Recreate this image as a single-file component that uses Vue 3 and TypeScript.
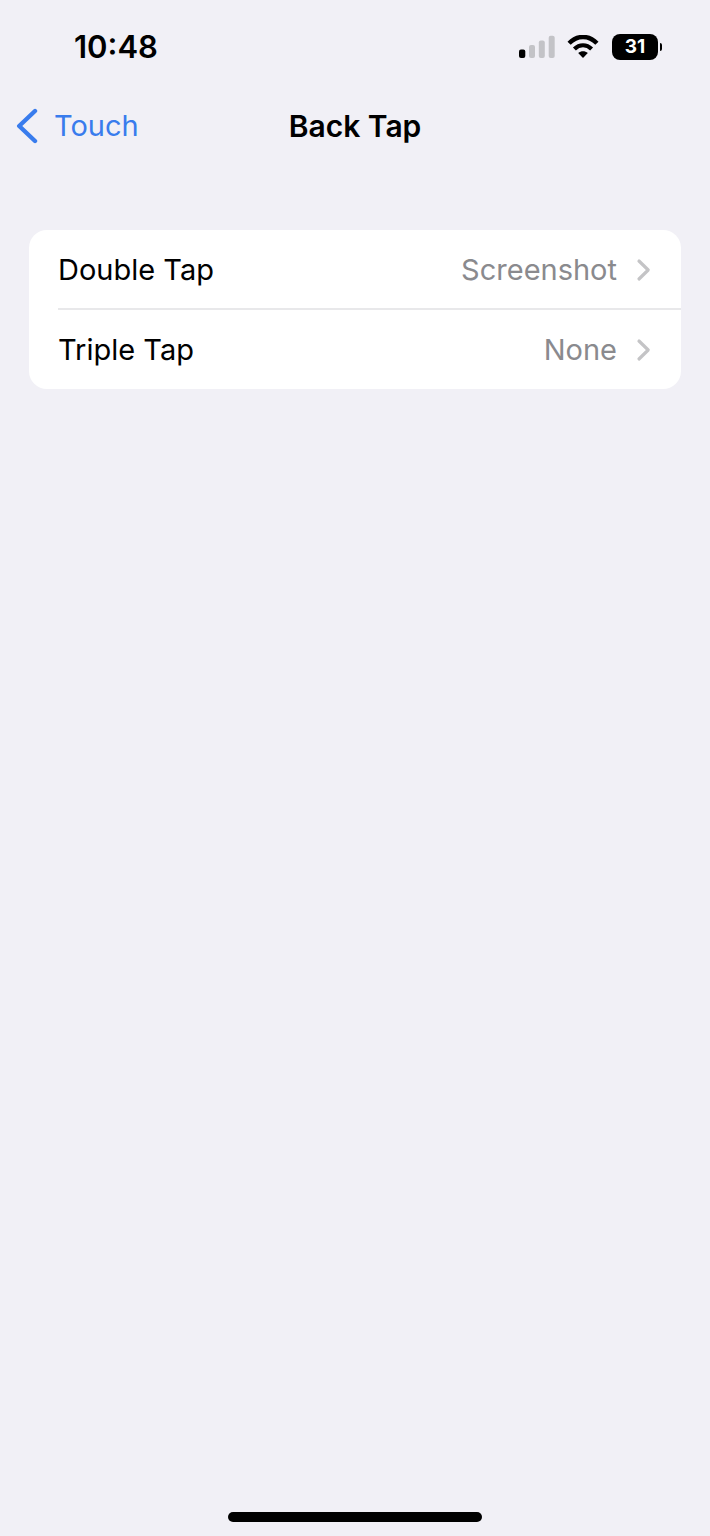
<script setup lang="ts">
interface Row {
  label: string
  value: string
}

const rows: Row[] = [
  { label: 'Double Tap', value: 'Screenshot' },
  { label: 'Triple Tap', value: 'None' },
]
</script>

<template>
  <div class="screen">
    <header>
      <div class="status">
        <time class="clock">10:48</time>
        <div class="indicators">
          <svg class="signal" viewBox="0 0 36 24" width="36" height="24" role="img" aria-label="Signal, one bar">
            <rect x="0" y="14.5" width="6.3" height="8.5" rx="2" fill="#000" />
            <rect x="10" y="10" width="6" height="13" rx="2" fill="#c3c3c7" />
            <rect x="19.8" y="5.5" width="6" height="17.5" rx="2" fill="#c3c3c7" />
            <rect x="29.7" y="0.8" width="6" height="22.2" rx="2" fill="#c3c3c7" />
          </svg>
          <svg class="wifi" viewBox="0 0 32 24" width="32" height="24" role="img" aria-label="Wi-Fi">
            <path d="M2.1 8.3C10-0.2 22-0.2 29.9 8.3" fill="none" stroke="#000" stroke-width="4.4" />
            <path d="M7.4 13.9C12.4 9 19.6 9 24.6 13.9" fill="none" stroke="#000" stroke-width="4.2" />
            <path d="M11.2 18.1C14 15.6 18 15.6 20.8 18.1L16.5 22.6Q16 23.1 15.5 22.6Z" fill="#000" />
          </svg>
          <div class="battery" role="img" aria-label="Battery 31 percent">
            <span class="charge">31</span>
            <span class="nub"></span>
          </div>
        </div>
      </div>
      <nav class="nav">
        <a class="back" href="#touch">
          <svg viewBox="0 0 22 36" width="22" height="36" aria-hidden="true">
            <path d="M19 3L3.2 18L19 33" fill="none" stroke="#397ced" stroke-width="4.4" stroke-linecap="round" stroke-linejoin="round" />
          </svg>
          <span>Touch</span>
        </a>
        <h1>Back Tap</h1>
      </nav>
    </header>
    <main>
      <ul class="list">
        <li v-for="row in rows" :key="row.label">
          <button class="row" type="button">
            <span class="label">{{ row.label }}</span>
            <span class="value">{{ row.value }}</span>
            <svg viewBox="0 0 16 24" width="16" height="24" aria-hidden="true">
              <path d="M3 3L12.2 12L3 21" fill="none" stroke="#c4c4c6" stroke-width="3.2" stroke-linecap="round" stroke-linejoin="round" />
            </svg>
          </button>
        </li>
      </ul>
    </main>
    <div class="home"></div>
  </div>
</template>

<style>
body {
  background: #f1f0f6;
}
</style>

<style scoped>
.screen {
  box-sizing: border-box;
  display: flex;
  flex-direction: column;
  min-height: 100vh;
  background: #f1f0f6;
  color: #000;
  font-family: Inter, "Liberation Sans", sans-serif;
  font-size: 29px;
  line-height: 36px;
}
.status {
  display: flex;
  align-items: center;
  justify-content: space-between;
  height: 94px;
  padding: 0 48px 0 74px;
}
.clock {
  font-size: 31px;
  font-weight: 600;
}
.indicators {
  display: flex;
  align-items: center;
}
.wifi {
  margin: 0 13px 0 12px;
}
.battery {
  display: flex;
  align-items: center;
  gap: 2px;
}
.charge {
  width: 46px;
  border-radius: 8px;
  background: #000;
  color: #fff;
  font-size: 19px;
  font-weight: 700;
  line-height: 26px;
  text-align: center;
}
.nub {
  width: 2px;
  height: 8px;
  border-radius: 0 4px 4px 0;
  background: #000;
}
.nav {
  display: grid;
  grid-template-columns: 1fr auto 1fr;
  align-items: center;
  height: 64px;
  padding: 0 16px;
}
.back {
  display: flex;
  align-items: center;
  gap: 16px;
  color: #397ced;
  text-decoration: none;
}
h1 {
  margin: 0;
  font-size: 30px;
  font-weight: 600;
}
main {
  flex: 1;
  padding: 72px 29px 0;
}
.list {
  margin: 0;
  padding: 0;
  overflow: hidden;
  border-radius: 18px;
  background: #fff;
  list-style: none;
}
li {
  padding-left: 29px;
}
.row {
  display: flex;
  align-items: center;
  box-sizing: border-box;
  width: 100%;
  height: 79px;
  padding: 0 29px 0 0;
  border: 0;
  background: none;
  color: inherit;
  font: inherit;
  text-align: left;
}
li:not(:last-child) .row {
  height: 80px;
  padding-top: 2px;
  border-bottom: 2px solid #e8e8ea;
}
.label {
  flex: 1;
}
.value {
  margin-right: 19px;
  color: #8a8a8e;
}
.home {
  align-self: center;
  width: 254px;
  height: 10px;
  margin-bottom: 14px;
  border-radius: 5px;
  background: #000;
}
</style>
